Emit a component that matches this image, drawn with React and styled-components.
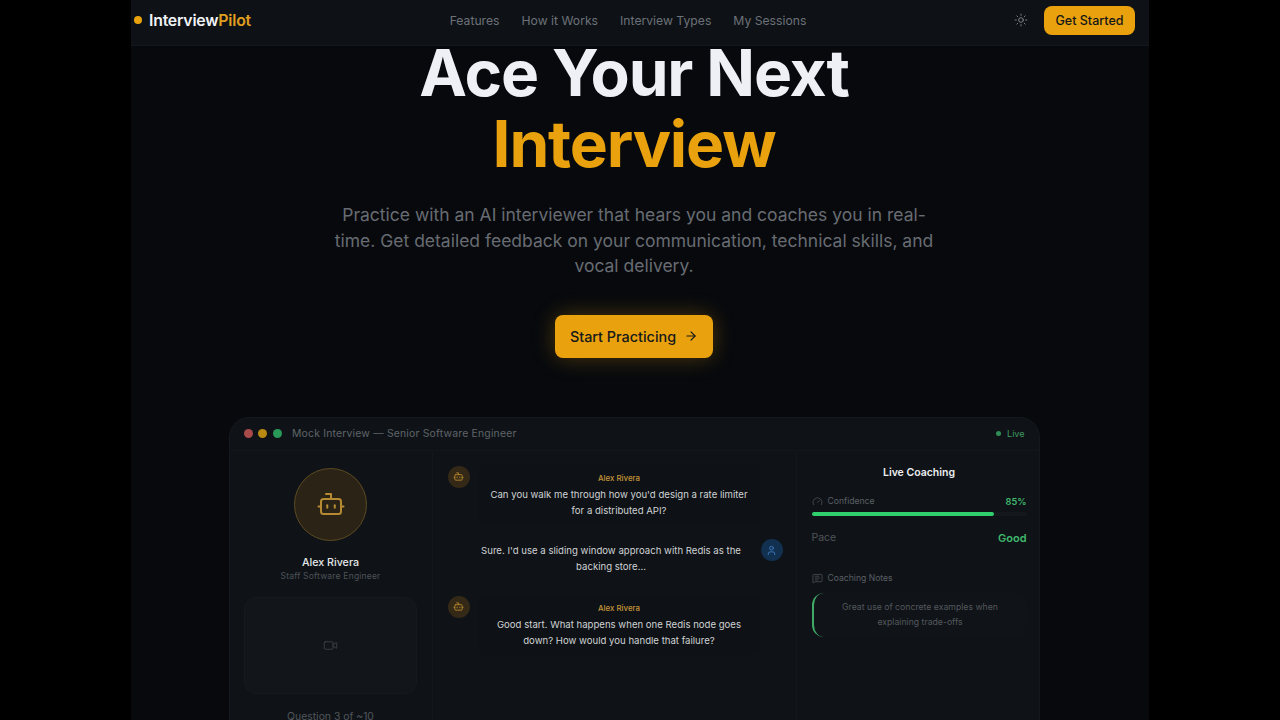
import React from 'react'
import styled, { createGlobalStyle } from 'styled-components'
import { ArrowRight, Bot, Gauge, MessageSquareText, Sun, User, Video } from 'lucide-react'

const GlobalStyle = createGlobalStyle`
  html, body {
    margin: 0;
    height: 100%;
    background: #000;
    overflow: hidden;
  }
  * {
    box-sizing: border-box;
  }
`

const Page = styled.div`
  width: 1280px;
  height: 720px;
  display: flex;
  justify-content: center;
  background: #000;
  font-family: Inter, "Liberation Sans", sans-serif;
`

const Frame = styled.div`
  width: 1018px;
  height: 720px;
  overflow: hidden;
  background: #07090d;
  display: flex;
  flex-direction: column;
`

const Nav = styled.nav`
  width: 100%;
  height: 46px;
  flex-shrink: 0;
  display: grid;
  grid-template-columns: 1fr auto 1fr;
  align-items: center;
  padding: 0 14px 5px 3px;
  background: #0e1217;
  border-bottom: 1px solid #14181d;
`

const Logo = styled.div`
  display: flex;
  align-items: center;
  gap: 7px;
  font-size: 15.8px;
  font-weight: 600;
  letter-spacing: -0.2px;
  color: #f1f3f6;

  span {
    color: #e09f1f;
  }
`

const LogoDot = styled.i`
  width: 8px;
  height: 8px;
  border-radius: 50%;
  background: #e9a20d;
`

const NavLinks = styled.div`
  display: flex;
  gap: 22px;
  margin-right: 13px;
  font-size: 12.2px;
  color: #6c7178;
`

const NavActions = styled.div`
  display: flex;
  align-items: center;
  justify-content: flex-end;
  gap: 16px;
  color: #8a8f96;
`

const SmallButton = styled.button`
  height: 29px;
  width: 91px;
  border: 0;
  border-radius: 8px;
  background: #e9a20d;
  color: #13161a;
  font: 500 12.5px Inter, "Liberation Sans", sans-serif;
`

const Hero = styled.main`
  display: flex;
  flex-direction: column;
  align-items: center;
  padding-right: 12px;
`

const Title = styled.h1`
  margin: -9px 0 0;
  font-size: 64px;
  line-height: 71px;
  font-weight: 700;
  letter-spacing: -1.15px;
  text-align: center;
  color: #eef0f5;

  span {
    display: block;
    color: #e9a20d;
  }
`

const Lead = styled.p`
  width: 610px;
  margin: 23px 0 0;
  font-size: 17.5px;
  line-height: 25.5px;
  text-align: center;
  color: #686c72;
`

const CtaButton = styled.button`
  margin-top: 36px;
  width: 158px;
  height: 43px;
  display: flex;
  align-items: center;
  justify-content: center;
  gap: 8px;
  flex-shrink: 0;
  border: 0;
  border-radius: 8px;
  background: #e9a20d;
  color: #16181b;
  font: 500 14.4px Inter, "Liberation Sans", sans-serif;
  box-shadow: 0 0 22px rgba(233, 162, 13, 0.3);
`

const Mock = styled.section`
  width: 811px;
  margin-top: 59px;
  flex-shrink: 0;
  border: 1px solid #14191d;
  border-radius: 20px 20px 0 0;
  background: #0f1317;
`

const TitleBar = styled.header`
  height: 33px;
  display: flex;
  align-items: center;
  padding: 0 14px;
  border-bottom: 1px solid #13171b;
`

const Light = styled.i`
  width: 9px;
  height: 9px;
  margin-right: 5.5px;
  border-radius: 50%;
  background: ${(p) => p.$color};
`

const WindowName = styled.div`
  margin-left: 5px;
  flex: 1;
  font-size: 10.4px;
  letter-spacing: 0.2px;
  color: #5f6469;
`

const LiveTag = styled.div`
  display: flex;
  align-items: center;
  gap: 6px;
  font-size: 9px;
  color: #3f9a62;

  i {
    width: 5px;
    height: 5px;
    border-radius: 50%;
    background: #2f8f56;
  }
`

const Columns = styled.div`
  height: 270px;
  display: grid;
  grid-template-columns: 202px 364px 1fr;
`

const Panel = styled.div`
  display: flex;
  flex-direction: column;
  border-left: ${(p) => (p.$divided ? '1px solid #13171b' : '0')};
`

const InterviewerPanel = styled(Panel)`
  align-items: center;
  padding: 17px 14px 0;
`

const Avatar = styled.div`
  width: 73px;
  height: 73px;
  display: flex;
  align-items: center;
  justify-content: center;
  border-radius: 50%;
  border: 1px solid #5c4a22;
  background: #2b2416;
  color: #b58a33;
`

const Name = styled.div`
  margin-top: 15px;
  font-size: 10.7px;
  font-weight: 500;
  color: #e5e7ea;
`

const Role = styled.div`
  margin-top: 2px;
  font-size: 8.5px;
  letter-spacing: 0.2px;
  color: #4d5258;
`

const VideoBox = styled.div`
  width: 173px;
  height: 97px;
  margin-top: 16px;
  display: flex;
  align-items: center;
  justify-content: center;
  border: 1px solid #161a1e;
  border-radius: 12px;
  background: #121519;
  color: #43474d;
`

const Progress = styled.div`
  margin-top: 16px;
  font-size: 10.4px;
  color: #50555b;
`

const ChatPanel = styled(Panel)`
  padding: 13px 13px 0 15px;
  gap: 12.5px;
`

const Message = styled.div`
  display: flex;
  gap: 8px;
  align-items: flex-start;
  justify-content: ${(p) => (p.$mine ? 'flex-end' : 'flex-start')};
`

const ChatIcon = styled.div`
  width: 22px;
  height: 22px;
  flex-shrink: 0;
  margin-top: 2px;
  display: flex;
  align-items: center;
  justify-content: center;
  border-radius: 50%;
  background: ${(p) => (p.$mine ? '#12304f' : '#342916')};
  color: ${(p) => (p.$mine ? '#3f7cc4' : '#b4862d')};
`

const Bubble = styled.div`
  width: 283px;
  padding: 6px 10px;
  border-radius: 10px;
  background: ${(p) => (p.$mine ? 'transparent' : '#0e1216')};
  text-align: center;
  font-size: 9.6px;
  line-height: 16px;
  color: #d0d2d5;
`

const Sender = styled.div`
  font-size: 7.9px;
  line-height: 17px;
  font-weight: 500;
  color: #c4943a;
`

const CoachPanel = styled(Panel)`
  padding: 15px 12px 0 15px;
`

const CoachTitle = styled.div`
  font-size: 10.5px;
  font-weight: 600;
  text-align: center;
  color: #eceef0;
`

const MetricRow = styled.div`
  display: flex;
  align-items: center;
  justify-content: space-between;
  margin-top: ${(p) => p.$gap}px;
  font-size: 10.5px;
  color: #4f545a;
`

const MetricLabel = styled.div`
  display: flex;
  align-items: center;
  gap: 5px;
  font-size: 8.6px;
  color: #5a5f65;
`

const MetricValue = styled.div`
  font-weight: 600;
  color: #3fb96d;
  font-size: ${(p) => p.$size}px;
`

const Track = styled.div`
  height: 4px;
  margin-top: 5px;
  border-radius: 2px;
  background: #14181c;
`

const Fill = styled.div`
  height: 100%;
  border-radius: 2px;
  background: #2ecf6c;
`

const Note = styled.div`
  margin-top: 9px;
  height: 44px;
  display: flex;
  align-items: center;
  justify-content: center;
  padding: 0 14px;
  border-left: 2px solid #3fa866;
  border-radius: 12px;
  background: #101317;
  text-align: center;
  font-size: 8.7px;
  line-height: 14.5px;
  color: #53585e;
`

const messages = [
  { id: 1, sender: 'Alex Rivera', text: "Can you walk me through how you'd design a rate limiter for a distributed API?" },
  { id: 2, mine: true, text: "Sure. I'd use a sliding window approach with Redis as the backing store..." },
  { id: 3, sender: 'Alex Rivera', text: 'Good start. What happens when one Redis node goes down? How would you handle that failure?' },
]

const App = () => {
  return (
    <Page>
      <GlobalStyle />
      <Frame>
        <Nav>
          <Logo>
            <LogoDot />
            <div>Interview<span>Pilot</span></div>
          </Logo>
          <NavLinks>
            <div>Features</div>
            <div>How it Works</div>
            <div>Interview Types</div>
            <div>My Sessions</div>
          </NavLinks>
          <NavActions>
            <Sun size={14} strokeWidth={1.5} />
            <SmallButton>Get Started</SmallButton>
          </NavActions>
        </Nav>

        <Hero>
          <Title>Ace Your Next<span>Interview</span></Title>
          <Lead>
            Practice with an AI interviewer that hears you and coaches you in real-time. Get detailed
            feedback on your communication, technical skills, and vocal delivery.
          </Lead>
          <CtaButton>Start Practicing <ArrowRight size={14} /></CtaButton>

          <Mock>
            <TitleBar>
              <Light $color="#a84a4a" />
              <Light $color="#b98a12" />
              <Light $color="#2a9a58" />
              <WindowName>Mock Interview — Senior Software Engineer</WindowName>
              <LiveTag><i />Live</LiveTag>
            </TitleBar>
            <Columns>
              <InterviewerPanel>
                <Avatar><Bot size={30} strokeWidth={1.6} /></Avatar>
                <Name>Alex Rivera</Name>
                <Role>Staff Software Engineer</Role>
                <VideoBox><Video size={15} strokeWidth={1.3} /></VideoBox>
                <Progress>Question 3 of ~10</Progress>
              </InterviewerPanel>

              <ChatPanel $divided>
                {messages.map((m) => (
                  <Message key={m.id} $mine={m.mine}>
                    {!m.mine && <ChatIcon><Bot size={11} /></ChatIcon>}
                    <Bubble $mine={m.mine}>
                      {m.sender && <Sender>{m.sender}</Sender>}
                      {m.text}
                    </Bubble>
                    {m.mine && <ChatIcon $mine><User size={11} /></ChatIcon>}
                  </Message>
                ))}
              </ChatPanel>

              <CoachPanel $divided>
                <CoachTitle>Live Coaching</CoachTitle>
                <MetricRow $gap={17}>
                  <MetricLabel><Gauge size={11} strokeWidth={1.4} />Confidence</MetricLabel>
                  <MetricValue $size={9.2}>85%</MetricValue>
                </MetricRow>
                <Track><Fill style={{ width: '85%' }} /></Track>
                <MetricRow $gap={15}>
                  <div>Pace</div>
                  <MetricValue $size={11}>Good</MetricValue>
                </MetricRow>
                <MetricRow $gap={28}>
                  <MetricLabel><MessageSquareText size={11} strokeWidth={1.4} />Coaching Notes</MetricLabel>
                </MetricRow>
                <Note>Great use of concrete examples when explaining trade-offs</Note>
              </CoachPanel>
            </Columns>
          </Mock>
        </Hero>
      </Frame>
    </Page>
  )
}

export default App
